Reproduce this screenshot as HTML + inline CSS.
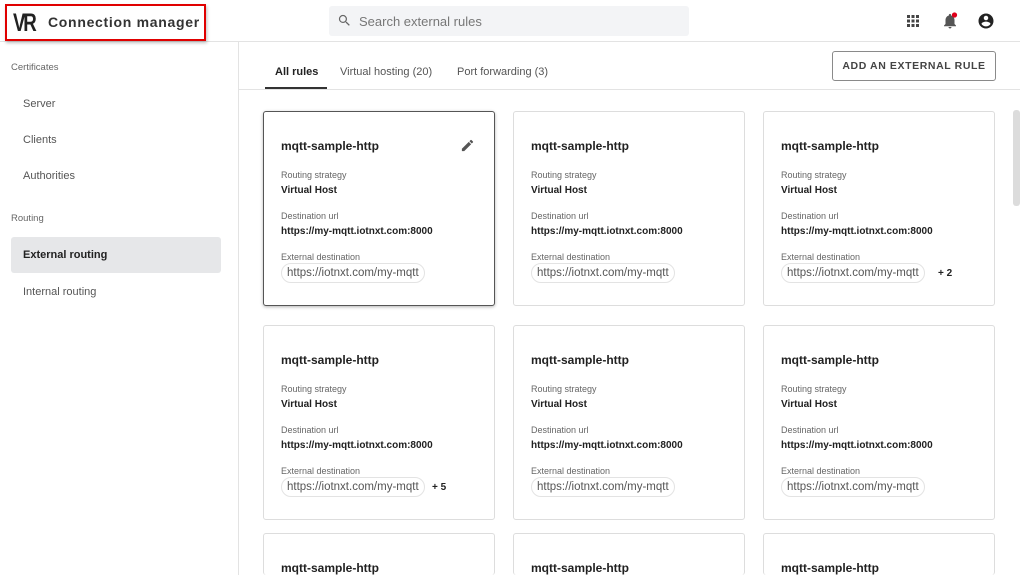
<!DOCTYPE html>
<html style="width:1020px;height:575px;overflow:hidden"><head><style>
*{box-sizing:border-box;margin:0;padding:0}
body{width:1020px;height:575px;overflow:hidden;background:#fff;font-family:"Liberation Sans",sans-serif;color:#212121;position:relative}
.hdr{position:absolute;left:0;top:0;width:1020px;height:42px;border-bottom:1px solid #e3e3e3}
.logo{position:absolute;left:5px;top:4px;width:201px;height:37px;border:2px solid #e00000;box-shadow:1px 2px 3px rgba(0,0,0,.25)}
.logo .v{position:absolute;left:6px;top:3px;font-size:25px;font-weight:bold;letter-spacing:-3px;color:#222;transform:scaleX(.75);transform-origin:left}
.logo .t{position:absolute;left:41px;top:8px;font-size:14px;font-weight:bold;letter-spacing:.7px;color:#333;white-space:nowrap}
.search{position:absolute;left:329px;top:6px;width:360px;height:30px;background:#f3f4f6;border-radius:3px}
.search span{position:absolute;left:30px;top:8px;font-size:13px;color:#777}
.side{position:absolute;left:0;top:42px;width:239px;height:533px;border-right:1px solid #e3e3e3}
.sec{position:absolute;left:11px;font-size:9.5px;color:#666}
.it{position:absolute;left:23px;font-size:11px;color:#555}
.act{position:absolute;left:11px;top:195px;width:210px;height:36px;background:#e6e7e9;border-radius:3px}
.tabs{position:absolute;left:239px;top:42px;width:781px;height:48px;border-bottom:1px solid #e3e3e3}
.tab{position:absolute;top:24px;font-size:11px;color:#555}
.btn{position:absolute;left:832px;top:51px;width:164px;height:30px;border:1px solid #8a8a8a;border-radius:3px;font-size:10.5px;font-weight:bold;letter-spacing:.6px;color:#444;text-align:center;line-height:28px;white-space:nowrap}
.card{position:absolute;width:232px;height:195px;border:1px solid #ddd;border-radius:3px;background:#fff}
.card.sel{border-color:#555;box-shadow:0 1px 3px rgba(0,0,0,.3)}
.card .h{position:absolute;left:17px;top:27px;font-size:12px;font-weight:bold}
.card .l{position:absolute;left:17px;font-size:9px;color:#666}
.card .vv{position:absolute;left:17px;font-size:10px;font-weight:bold}
.chip{position:absolute;left:17px;top:151px;height:20px;border:1px solid #e3e3e3;border-radius:10px;padding:0 5px;font-size:11.5px;color:#555;line-height:18px;white-space:nowrap}
.more{position:absolute;top:156px;font-size:10px;font-weight:bold}
.sb{position:absolute;left:1013px;top:110px;width:7px;height:96px;background:#dcdcdc;border-radius:3px}
</style></head><body>
<div class="hdr">
<div class="logo"><span class="v">VR</span><span class="t">Connection manager</span></div>
<div class="search"><svg style="position:absolute;left:8px;top:7px" width="15" height="15" viewBox="0 0 24 24"><path fill="#666" d="M15.5 14h-.79l-.28-.27A6.47 6.47 0 0016 9.5 6.5 6.5 0 109.5 16c1.61 0 3.09-.59 4.23-1.57l.27.28v.79l5 4.99L20.49 19l-4.99-5zm-6 0C7.01 14 5 11.990 5 9.5S7.01 5 9.5 5 14 7.01 14 9.5 11.99 14 9.5 14z"/></svg><span>Search external rules</span></div>
<svg style="position:absolute;left:906px;top:14px" width="14" height="14" viewBox="0 0 14 14" fill="#444"><rect x="1" y="1" width="3" height="3"/><rect x="5.5" y="1" width="3" height="3"/><rect x="10" y="1" width="3" height="3"/><rect x="1" y="5.5" width="3" height="3"/><rect x="5.5" y="5.5" width="3" height="3"/><rect x="10" y="5.5" width="3" height="3"/><rect x="1" y="10" width="3" height="3"/><rect x="5.5" y="10" width="3" height="3"/><rect x="10" y="10" width="3" height="3"/></svg>
<svg style="position:absolute;left:941px;top:12px" width="18" height="18" viewBox="0 0 24 24"><path fill="#555" d="M12 22c1.1 0 2-.9 2-2h-4c0 1.1.9 2 2 2zm6-6v-5c0-3.07-1.63-5.640-4.5-6.32V4c0-.83-.67-1.5-1.5-1.5s-1.5.67-1.5 1.5v.68C7.64 5.36 6 7.92 6 11v5l-2 2v1h16v-1l-2-2z"/><circle cx="18" cy="4" r="3.5" fill="#e0001b"/></svg>
<svg style="position:absolute;left:977px;top:12px" width="18" height="18" viewBox="0 0 24 24"><path fill="#222" d="M12 2C6.48 2 2 6.48 2 12s4.48 10 10 10 10-4.48 10-10S17.52 2 12 2zm0 3c1.66 0 3 1.34 3 3s-1.34 3-3 3-3-1.34-3-3 1.34-3 3-3zm0 14.2a7.2 7.2 0 01-6-3.22c.03-1.99 4-3.08 6-3.08 1.99 0 5.97 1.09 6 3.08a7.2 7.2 0 01-6 3.22z"/></svg>
</div>
<div class="side">
<div class="sec" style="top:20px">Certificates</div>
<div class="it" style="top:56px">Server</div>
<div class="it" style="top:92px">Clients</div>
<div class="it" style="top:128px">Authorities</div>
<div class="sec" style="top:171px">Routing</div>
<div class="act"></div>
<div class="it" style="top:207px;font-weight:bold;color:#222">External routing</div>
<div class="it" style="top:244px">Internal routing</div>
</div>
<div class="tabs">
<div class="tab" style="left:36px;font-weight:bold;color:#222">All rules</div>
<div style="position:absolute;left:26px;top:45px;width:62px;height:2px;background:#333"></div>
<div class="tab" style="left:101px">Virtual hosting (20)</div>
<div class="tab" style="left:218px">Port forwarding (3)</div>
</div>
<div class="btn">ADD AN EXTERNAL RULE</div>

<div class="card sel" style="left:263px;top:111px"><div class="h">mqtt-sample-http</div>
<svg style="position:absolute;left:196px;top:26px" width="15" height="15" viewBox="0 0 24 24"><path fill="#555" d="M3 17.25V21h3.75L17.81 9.94l-3.75-3.75L3 17.25zM20.71 7.04a1 1 0 000-1.41l-2.34-2.34a1 1 0 00-1.41 0l-1.83 1.83 3.75 3.75 1.83-1.83z"/></svg>
<div class="l" style="top:58px">Routing strategy</div><div class="vv" style="top:73px">Virtual Host</div><div class="l" style="top:99px">Destination url</div><div class="vv" style="top:114px">https://my-mqtt.iotnxt.com:8000</div><div class="l" style="top:140px">External destination</div><div class="chip">https://iotnxt.com/my-mqtt</div></div>
<div class="card" style="left:513px;top:111px"><div class="h">mqtt-sample-http</div><div class="l" style="top:58px">Routing strategy</div><div class="vv" style="top:73px">Virtual Host</div><div class="l" style="top:99px">Destination url</div><div class="vv" style="top:114px">https://my-mqtt.iotnxt.com:8000</div><div class="l" style="top:140px">External destination</div><div class="chip">https://iotnxt.com/my-mqtt</div></div>
<div class="card" style="left:763px;top:111px"><div class="h">mqtt-sample-http</div><div class="l" style="top:58px">Routing strategy</div><div class="vv" style="top:73px">Virtual Host</div><div class="l" style="top:99px">Destination url</div><div class="vv" style="top:114px">https://my-mqtt.iotnxt.com:8000</div><div class="l" style="top:140px">External destination</div><div class="chip">https://iotnxt.com/my-mqtt</div><div class="more" style="left:174px">+ 2</div></div>

<div class="card" style="left:263px;top:325px"><div class="h">mqtt-sample-http</div><div class="l" style="top:58px">Routing strategy</div><div class="vv" style="top:73px">Virtual Host</div><div class="l" style="top:99px">Destination url</div><div class="vv" style="top:114px">https://my-mqtt.iotnxt.com:8000</div><div class="l" style="top:140px">External destination</div><div class="chip">https://iotnxt.com/my-mqtt</div><div class="more" style="left:168px">+ 5</div></div>
<div class="card" style="left:513px;top:325px"><div class="h">mqtt-sample-http</div><div class="l" style="top:58px">Routing strategy</div><div class="vv" style="top:73px">Virtual Host</div><div class="l" style="top:99px">Destination url</div><div class="vv" style="top:114px">https://my-mqtt.iotnxt.com:8000</div><div class="l" style="top:140px">External destination</div><div class="chip">https://iotnxt.com/my-mqtt</div></div>
<div class="card" style="left:763px;top:325px"><div class="h">mqtt-sample-http</div><div class="l" style="top:58px">Routing strategy</div><div class="vv" style="top:73px">Virtual Host</div><div class="l" style="top:99px">Destination url</div><div class="vv" style="top:114px">https://my-mqtt.iotnxt.com:8000</div><div class="l" style="top:140px">External destination</div><div class="chip">https://iotnxt.com/my-mqtt</div></div>

<div class="card" style="left:263px;top:533px;height:42px;border-bottom:none"><div class="h">mqtt-sample-http</div></div>
<div class="card" style="left:513px;top:533px;height:42px;border-bottom:none"><div class="h">mqtt-sample-http</div></div>
<div class="card" style="left:763px;top:533px;height:42px;border-bottom:none"><div class="h">mqtt-sample-http</div></div>
<div class="sb"></div>
</body></html>
